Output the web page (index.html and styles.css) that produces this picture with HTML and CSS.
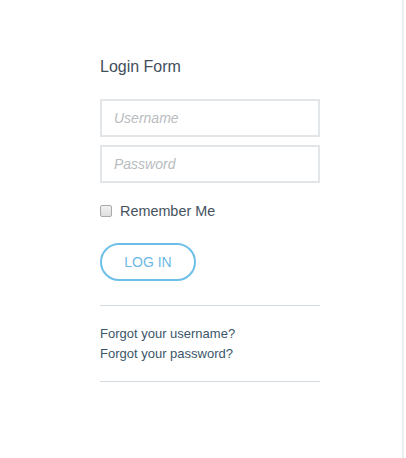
FILE: index.html
```html
<!DOCTYPE html>
<html>
<head>
<meta charset="utf-8">
<link rel="stylesheet" href="styles.css">
</head>
<body>
<div class="page">
  <div class="form">
    <h3 class="title">Login Form</h3>
    <input class="field" type="text" placeholder="Username">
    <input class="field" type="password" placeholder="Password">
    <label class="remember"><input type="checkbox" class="check"><span>Remember Me</span></label>
    <button class="btn">LOG IN</button>
    <hr class="sep">
    <ul class="links">
      <li><a href="#">Forgot your username?</a></li>
      <li><a href="#">Forgot your password?</a></li>
    </ul>
    <hr class="sep">
  </div>
</div>
</body>
</html>
```
FILE: styles.css
```css
html, body { margin: 0; padding: 0; background: #fff; }
body { font-family: "Liberation Sans", Arial, sans-serif; color: #3d4d59; }
.page {
  width: 404px;
  height: 458px;
  border-right: 2px solid #efefef;
  padding: 0 0 0 100px;
  box-sizing: border-box;
}
.form { width: 220px; padding-top: 57px; display: flex; flex-direction: column; align-items: flex-start; }
.title { margin: 0 0 22px 0; font-size: 16px; font-weight: normal; line-height: 20px; color: #3f4f5b; }
.field {
  width: 220px; height: 38px; box-sizing: border-box;
  border: 2px solid #e3e6e8; margin: 0 0 8px 0; padding: 0 12px 1px 12px;
  font-family: "Liberation Sans", Arial, sans-serif; font-size: 14px; font-style: italic;
  outline: none; color: #555;
}
.field::placeholder { color: #b8bcc0; font-style: italic; }
.remember { display: flex; align-items: center; margin-top: 12px; font-size: 14.4px; color: #44525e; }
.check {
  appearance: none; -webkit-appearance: none;
  margin: 0 8px 0 0; width: 12px; height: 12px;
  border: 1px solid #a9a9a9; border-radius: 2px;
  background: linear-gradient(#f2f2f2, #dedede);
}
.btn {
  margin-top: 24px; width: 96px; height: 38px; border-radius: 19px;
  border: 2px solid #6dbfe9; background: #fff; color: #6db9e6;
  font-family: "Liberation Sans", Arial, sans-serif; font-size: 14px; padding: 0;
}
.sep { width: 220px; margin: 24px 0 0 0; border: 0; border-top: 1px solid #d3dce0; height: 0; }
.links { list-style: none; margin: 18px 0 0 0; padding: 0; font-size: 13px; line-height: 20px; }
.links a { color: #3b5668; text-decoration: none; }
.links + .sep { margin-top: 17px; }
```
